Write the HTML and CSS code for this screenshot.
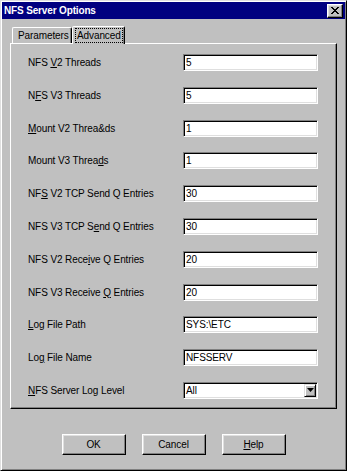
FILE: index.html
```html
<!DOCTYPE html>
<html lang="en">
<head>
    <meta charset="UTF-8">
    <title>NFS Server Options</title>
    <link rel="stylesheet" href="styles.css">
</head>
<body>
    <div class="window">
        <div class="titlebar">
            <span class="title">NFS Server Options</span>
            <button class="close">
                <svg width="8" height="7" viewBox="0 0 8 7">
                    <path d="M0 0h2v1h1v1h2v-1h1v-1h2v1h-1v1h-1v1h-1v1h1v1h1v1h1v1h-2v-1h-1v-1h-2v1h-1v1h-2v-1h1v-1h1v-1h1v-1h-1v-1h-1v-1h-1z" fill="#000"/>
                </svg>
            </button>
        </div>

        <div class="content">
            <div class="tabs">
                <div class="tab params">Parameters</div>
                <div class="tab active"><span class="focus">Advanced</span></div>
            </div>

            <div class="panel">
                <div class="form">
                    <label>NFS <u>V</u>2 Threads</label>
                    <div class="field">5</div>

                    <label>N<u>F</u>S V3 Threads</label>
                    <div class="field">5</div>

                    <label><u>M</u>ount V2 Threa&amp;ds</label>
                    <div class="field">1</div>

                    <label>Mount V3 Threa<u>d</u>s</label>
                    <div class="field">1</div>

                    <label>NF<u>S</u> V2 TCP Send Q Entries</label>
                    <div class="field">30</div>

                    <label>NFS V3 TCP S<u>e</u>nd Q Entries</label>
                    <div class="field">30</div>

                    <label>NFS V2 Rece<u>i</u>ve Q Entries</label>
                    <div class="field">20</div>

                    <label>NFS V3 Receive <u>Q</u> Entries</label>
                    <div class="field">20</div>

                    <label><u>L</u>og File Path</label>
                    <div class="field">SYS:\ETC</div>

                    <label>Lo<u>g</u> File Name</label>
                    <div class="field">NFSSERV</div>

                    <label><u>N</u>FS Server Log Level</label>
                    <div class="field select">
                        <span class="value">All</span>
                        <span class="drop">
                            <svg width="7" height="4" viewBox="0 0 7 4"><path d="M0 0h7l-3.5 4z" fill="#000"/></svg>
                        </span>
                    </div>
                </div>
            </div>

            <div class="buttons">
                <button class="btn">OK</button>
                <button class="btn">Cancel</button>
                <button class="btn"><u>H</u>elp</button>
            </div>
        </div>
    </div>
</body>
</html>
```

FILE: styles.css
```css
/* General Styles */
* {
    margin: 0;
    padding: 0;
    box-sizing: border-box;
}

body {
    font-family: "Liberation Sans", Arial, sans-serif;
    font-size: 10px;
    letter-spacing: -0.1px;
    color: #000;
    background: #c0c0c0;
}

.window {
    width: 347px;
    height: 471px;
    background: #c0c0c0;
    border: 1px solid;
    border-color: #dfdfdf #000 #000 #dfdfdf;
    box-shadow: inset 1px 1px #fff, inset -1px -1px #808080;
    padding: 1px;
}

/* Title bar */
.titlebar {
    height: 17px;
    background: #000080;
    color: #fff;
    display: flex;
    align-items: center;
    justify-content: space-between;
    padding: 0 2px 0 2px;
}

.title {
    font-weight: bold;
    font-size: 10px;
    letter-spacing: -0.15px;
}

.close {
    width: 16px;
    height: 14px;
    background: #c0c0c0;
    border: 1px solid;
    border-color: #fff #000 #000 #fff;
    box-shadow: inset -1px -1px #808080, inset 1px 1px #dfdfdf;
    display: flex;
    align-items: center;
    justify-content: center;
}

/* Tabs */
.content {
    padding: 0 8px;
}

.tabs {
    display: flex;
    align-items: flex-end;
    height: 24px;
    padding-left: 2px;
    position: relative;
    z-index: 1;
}

.tab {
    height: 16px;
    padding: 0 0 0 5px;
    line-height: 15px;
    border: 1px solid;
    border-bottom: none;
    border-color: #fff #000 transparent #fff;
    box-shadow: inset -1px 0 #808080;
    border-radius: 2px 2px 0 0;
}

.tab.params {
    width: 60px;
}

.tab.active {
    width: 53px;
    height: 18px;
    margin-bottom: -1px;
    background: #c0c0c0;
    padding: 2px 0 0 3px;
    line-height: 13px;
}

.focus {
    display: inline-block;
    outline: 1px dotted #000;
    padding: 0 1px;
}

/* Panel */
.panel {
    height: 366px;
    border: 1px solid;
    border-color: #fff #000 #000 #fff;
    box-shadow: inset -1px -1px #808080;
    padding: 10px 0 0 17px;
}

.form {
    display: grid;
    grid-template-columns: 155px 135px;
    grid-auto-rows: 17px;
    row-gap: 15.8px;
    align-items: center;
}

.form label {
    white-space: nowrap;
}

.field {
    height: 17px;
    background: #fff;
    border: 1px solid;
    border-color: #808080 #fff #fff #808080;
    box-shadow: inset 1px 1px #000, inset -1px -1px #dfdfdf;
    padding: 1px 3px 0 2px;
    line-height: 14px;
}

.select {
    display: flex;
    justify-content: space-between;
    padding: 1px 1px 0 2px;
}

.drop {
    width: 12px;
    height: 13px;
    background: #c0c0c0;
    border: 1px solid;
    border-color: #dfdfdf #000 #000 #dfdfdf;
    box-shadow: inset 1px 1px #fff, inset -1px -1px #808080;
    display: flex;
    align-items: center;
    justify-content: center;
}

/* Buttons */
.buttons {
    display: flex;
    justify-content: center;
    gap: 16px;
    margin-top: 25px;
}

.btn {
    width: 64px;
    height: 21px;
    font-family: "Liberation Sans", Arial, sans-serif;
    font-size: 10px;
    letter-spacing: -0.1px;
    color: #000;
    background: #c0c0c0;
    border: 1px solid;
    border-color: #fff #000 #000 #fff;
    box-shadow: inset -1px -1px #808080, inset 1px 1px #dfdfdf;
}
```
